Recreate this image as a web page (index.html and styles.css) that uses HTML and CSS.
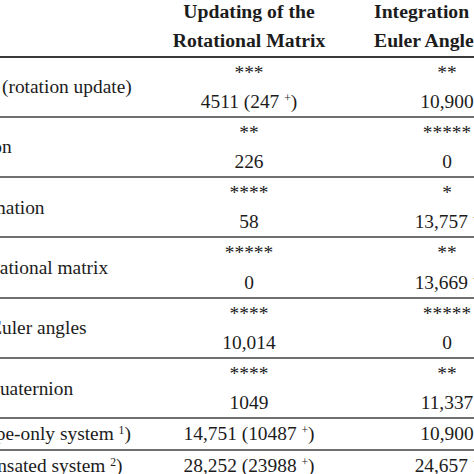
FILE: index.html
```html
<!DOCTYPE html>
<html lang="en">
<head>
<meta charset="utf-8">
<title>Computational cost comparison</title>
<link rel="stylesheet" href="styles.css">
</head>
<body>
<div class="page">
<table class="cost">
<colgroup><col class="c-label"><col class="c-val"><col class="c-val"></colgroup>
<thead>
<tr><th></th><th>Updating of the<br>Rotational Matrix</th><th class="h3">Integration of<br>Euler Angles</th></tr>
</thead>
<tbody>
<tr><td class="label">Integration step (rotation update)</td><td><span class="stars">***</span><br>4511 (247 <sup>+</sup>)</td><td><span class="stars">**</span><br>10,900</td></tr>
<tr><td class="label">Re-normalization</td><td><span class="stars">**</span><br>226</td><td><span class="stars">*****</span><br>0</td></tr>
<tr><td class="label">Frame transformation</td><td><span class="stars">****</span><br>58</td><td><span class="stars">*</span><br>13,757 <sup>+</sup></td></tr>
<tr><td class="label">Convert into rotational matrix</td><td><span class="stars">*****</span><br>0</td><td><span class="stars">**</span><br>13,669 <sup>+</sup></td></tr>
<tr><td class="label">Conversion to Euler angles</td><td><span class="stars">****</span><br>10,014</td><td><span class="stars">*****</span><br>0</td></tr>
<tr><td class="label">Conversion to quaternion</td><td><span class="stars">****</span><br>1049</td><td><span class="stars">**</span><br>11,337</td></tr>
<tr><td class="label">Totals (gyroscope-only system <sup>1</sup>)</td><td>14,751 (10487 <sup>+</sup>)</td><td>10,900</td></tr>
<tr><td class="label">Overall (compensated system <sup>2</sup>)</td><td>28,252 (23988 <sup>+</sup>)</td><td>24,657 <sup>+</sup></td></tr>
</tbody>
</table>
</div>
</body>
</html>
```

FILE: styles.css
```css
html, body {
  margin: 0;
  padding: 0;
  background: #ffffff;
}

body {
  font-family: "Liberation Serif", "Times New Roman", serif;
  font-size: 19.4px;
  color: #1c1c1c;
}

.page {
  width: 474px;
  height: 474px;
  overflow: hidden;
}

.cost {
  border-collapse: collapse;
  table-layout: fixed;
  width: 670px;
  margin-left: -124px;
  margin-top: -4px;
}

.c-label { width: 274px; }
.c-val { width: 198px; }

.cost th {
  font-size: 19.7px;
  font-weight: bold;
  line-height: 29.5px;
  padding: 0.5px 0 0;
  text-align: center;
  border-bottom: 2px solid #3a3a3a;
}

.cost th.h3 {
  text-align: left;
  padding-left: 26px;
}

.cost td {
  padding: 0;
  line-height: 29.15px;
  text-align: center;
  vertical-align: middle;
  border-bottom: 2px solid #707070;
  white-space: nowrap;
}

.cost td.label {
  text-align: left;
}

.cost sup {
  font-size: 0.6em;
  line-height: 0;
  vertical-align: 0.5em;
}
```
